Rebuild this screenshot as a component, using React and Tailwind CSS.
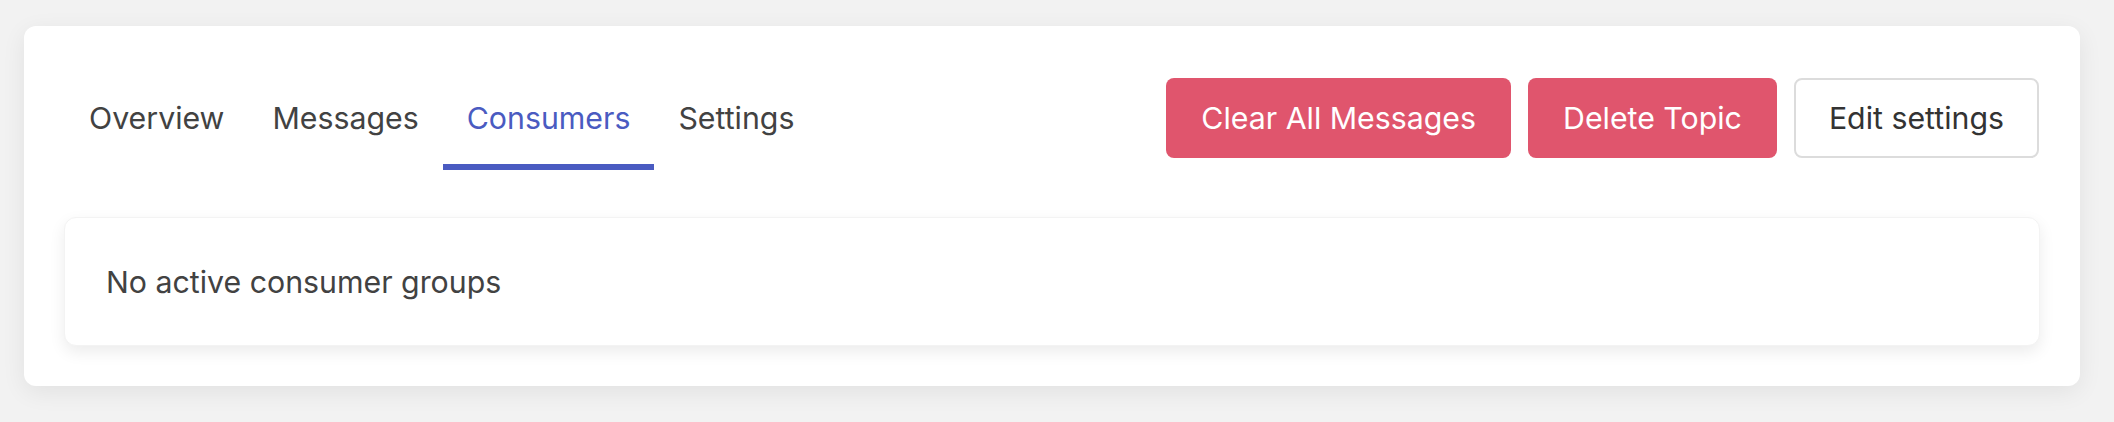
const tabs = ["Overview", "Messages", "Consumers", "Settings"];

function TopicTabs() {
  return (
    <div className="flex">
      {tabs.map((tab) => {
        const active = tab === "Consumers";
        return (
          <div
            key={tab}
            className={
              active
                ? "h-[104px] flex items-center px-[24px] pt-[8px] border-b-[6px] border-[#4a5bc1] text-[#4a5bc1]"
                : "h-[104px] flex items-center px-[24px] pt-[8px] border-b-[6px] border-transparent text-[#424242]"
            }
          >
            {tab}
          </div>
        );
      })}
    </div>
  );
}

export default function App() {
  return (
    <div className="min-h-[422px] bg-[#f2f2f2] pt-[26px] pl-[24px] font-['Inter',sans-serif] text-[30.3px]">
      <div className="w-[2056px] bg-white rounded-[12px] shadow-[0_6px_24px_rgba(0,0,0,0.07)] px-[40px] pt-[40px] pb-[40px]">

        {/* Tabs + actions */}
        <div className="flex items-center justify-between pl-[1px] pr-[1px]">
          <TopicTabs />

          <div className="flex items-center gap-[17px]">
            <button className="h-[80px] px-[35px] pt-[2px] rounded-[8px] bg-[#e0556d] text-white">
              Clear All Messages
            </button>
            <button className="h-[80px] px-[35px] pt-[2px] rounded-[8px] bg-[#e0556d] text-white">
              Delete Topic
            </button>
            <button className="h-[80px] px-[33px] pt-[2px] rounded-[8px] bg-white border-2 border-[#dcdcdc] text-[#333333]">
              Edit settings
            </button>
          </div>
        </div>

        {/* Consumers panel */}
        <div className="mt-[47px] h-[129px] flex items-center px-[41px] pt-[2px] bg-white rounded-[12px] border border-[#f3f3f3] shadow-[0_6px_16px_rgba(0,0,0,0.08)] text-[#424242]">
          No active consumer groups
        </div>

      </div>
    </div>
  );
}
